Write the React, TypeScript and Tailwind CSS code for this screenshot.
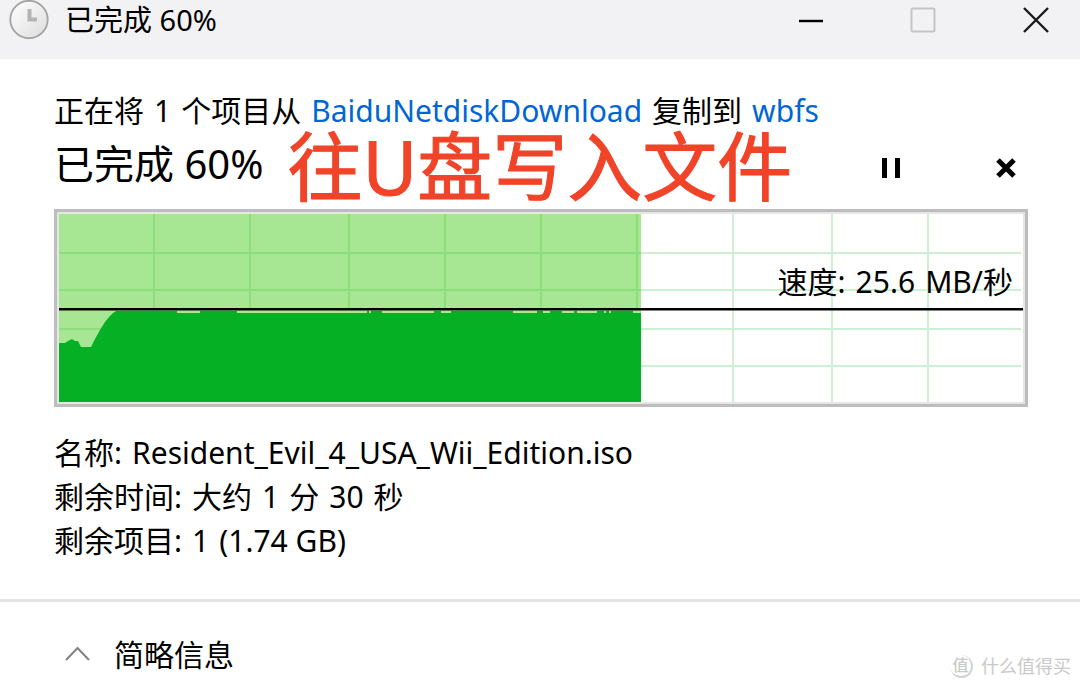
import { useState } from "react";

const verticals = [95, 191, 290, 386, 482, 578, 674, 773, 869];
const horizontals = [39, 76, 115, 152];

// Short dips of the transfer speed below the current-speed line: [start, end]
const dips = [
    [118, 141],
    [178, 308],
    [310, 312],
    [323, 375],
    [382, 392],
    [454, 478],
    [484, 491],
    [503, 515],
    [518, 538],
    [545, 547],
    [550, 552],
    [574, 582],
];

function ClockIcon() {
    return (
        <svg width="40" height="40" viewBox="0 0 40 40" aria-hidden="true">
            <defs>
                <linearGradient id="clock-face" x1="0" y1="0" x2="1" y2="1">
                    <stop offset="0" stopColor="#ffffff" />
                    <stop offset="1" stopColor="#dcdcdc" />
                </linearGradient>
            </defs>
            <circle cx="20" cy="19.5" r="18.7" fill="url(#clock-face)" stroke="#a3a3a3" strokeWidth="1.8" />
            <path d="M20.5 9v10.5H28" fill="none" stroke="#b4b4b4" strokeWidth="4" />
        </svg>
    );
}

function TitleBar() {
    return (
        <header className="flex h-[59px] items-start justify-between bg-[#f2f2f4] pl-[9px]">
            <div className="flex h-10 items-center gap-4">
                <ClockIcon />
                <h1 className="text-[29px] leading-10">已完成 60%</h1>
            </div>
            <div className="flex h-10 items-center">
                <button aria-label="最小化" className="flex h-10 w-28 items-center justify-center">
                    <svg width="26" height="26" viewBox="0 0 26 26">
                        <path d="M1 14h24" stroke="#000" strokeWidth="2.4" />
                    </svg>
                </button>
                <button aria-label="最大化" disabled className="flex h-10 w-28 items-center justify-center">
                    <svg width="26" height="26" viewBox="0 0 26 26">
                        <rect x="1.5" y="1.5" width="23" height="23" rx="1" fill="none" stroke="#c4c4c4" strokeWidth="2" />
                    </svg>
                </button>
                <button aria-label="关闭" className="flex h-10 w-[101px] items-center pl-11">
                    <svg width="26" height="26" viewBox="0 0 26 26">
                        <path d="M1 1l24 24M25 1L1 25" stroke="#1a1a1a" strokeWidth="2.4" />
                    </svg>
                </button>
            </div>
        </header>
    );
}

function SpeedChart() {
    return (
        <div className="relative border-[3px] border-[#bdbdbd] bg-[#e6e6e6] p-[2px]">
            <svg
                className="block h-[188px] w-full bg-white"
                viewBox="0 0 964 188"
                preserveAspectRatio="none"
                role="img"
                aria-label="速度"
            >
                <g stroke="#cdf0d5" strokeWidth="2">
                    {verticals.map((x) => (
                        <path key={x} d={`M${x} 0V188`} />
                    ))}
                    {horizontals.map((y) => (
                        <path key={y} d={`M0 ${y}H962`} />
                    ))}
                </g>
                <rect width="582" height="188" fill="#a7e693" />
                <g stroke="#8cdf7c" strokeWidth="2">
                    {verticals.slice(0, 6).map((x) => (
                        <path key={x} d={`M${x} 0V188`} />
                    ))}
                    {horizontals.map((y) => (
                        <path key={y} d={`M0 ${y}H582`} />
                    ))}
                </g>
                <path
                    d="M0 129H6L9 127L13 125L16 127H19L22 133H32L36 125L41 116L46 108L50 103L54 99L57 97H582V188H0Z"
                    fill="#06b025"
                />
                {dips.map(([start, end]) => (
                    <rect key={start} x={start} y="96" width={end - start} height="3" fill="#a7e693" />
                ))}
                <path d="M0 95.3H964" stroke="#000" strokeWidth="2.4" />
            </svg>
            <p className="absolute top-[50px] right-3 flex gap-[10px] text-[30px] leading-10">
                <span>速度:</span>
                <span>25.6</span>
                <span>MB/秒</span>
            </p>
        </div>
    );
}

export default function App() {
    const [paused, setPaused] = useState(false);
    const [expanded, setExpanded] = useState(true);

    return (
        <div className="relative min-h-screen bg-white font-['Noto_Sans','Noto_Sans_CJK_SC',sans-serif] text-black">
            <TitleBar />

            <main className="pt-8 pr-[52px] pl-[54px]">
                <p className="flex gap-[10px] text-[30px] leading-10 whitespace-nowrap">
                    <span>正在将</span>
                    <span>1</span>
                    <span>个项目从</span>
                    <a href="#source" className="text-[#0066d4]">BaiduNetdiskDownload</a>
                    <span>复制到</span>
                    <a href="#target" className="text-[#0066d4]">wbfs</a>
                </p>

                <div className="flex h-[78px] items-center pb-1 whitespace-nowrap">
                    <h2 className="pb-2 text-[40px] leading-[56px]">已完成 60%</h2>
                    <strong className="ml-6 pb-1 text-[75px] leading-[66px] font-normal text-[#f04328] [-webkit-text-stroke:1px]">
                        往U盘写入文件
                    </strong>
                    <div className="ml-auto flex items-center gap-[85px]">
                        <button
                            aria-label={paused ? "继续" : "暂停"}
                            onClick={() => setPaused(!paused)}
                            className="flex h-10 w-10 items-center justify-center"
                        >
                            <svg width="20" height="20" viewBox="0 0 20 20">
                                {paused ? <path d="M3 0l15 10L3 20z" /> : <path d="M1 0h5v20H1zM14 0h5v20h-5z" />}
                            </svg>
                        </button>
                        <button aria-label="取消" className="flex h-10 w-8 items-center">
                            <svg width="20" height="20" viewBox="0 0 20 20">
                                <path d="M2 2l16 16M18 2L2 18" stroke="#000" strokeWidth="5" />
                            </svg>
                        </button>
                    </div>
                </div>

                <SpeedChart />

                {expanded && (
                    <div className="pt-6 pb-9 text-[30px] leading-11">
                        <p className="flex gap-[10px]">
                            <span>名称:</span>
                            <span>Resident_Evil_4_USA_Wii_Edition.iso</span>
                        </p>
                        <p className="flex gap-[10px]">
                            <span>剩余时间:</span>
                            <span>大约</span>
                            <span>1</span>
                            <span>分</span>
                            <span>30</span>
                            <span>秒</span>
                        </p>
                        <p className="flex gap-[10px]">
                            <span>剩余项目:</span>
                            <span>1</span>
                            <span>(1.74 GB)</span>
                        </p>
                    </div>
                )}
            </main>

            <footer className="border-t-[3px] border-[#e3e3e3] px-[65px] pt-[31px]">
                <button onClick={() => setExpanded(!expanded)} className="flex items-center gap-6 text-[30px] leading-11">
                    <svg width="25" height="19" viewBox="0 0 25 19" className={expanded ? "" : "rotate-180"}>
                        <path d="M1 14L12.5 2L24 14" fill="none" stroke="#858585" strokeWidth="2.2" />
                    </svg>
                    {expanded ? "简略信息" : "详细信息"}
                </button>
            </footer>

            <div className="absolute right-[9px] bottom-2 flex items-center gap-2 text-[#c9c9c9]">
                <span className="flex h-[23px] w-[23px] items-center justify-center rounded-full border-r-2 border-b-2 border-[#d4d4d4] text-base leading-5 font-medium">
                    值
                </span>
                <span className="text-[18px] leading-7">什么值得买</span>
            </div>
        </div>
    );
}
